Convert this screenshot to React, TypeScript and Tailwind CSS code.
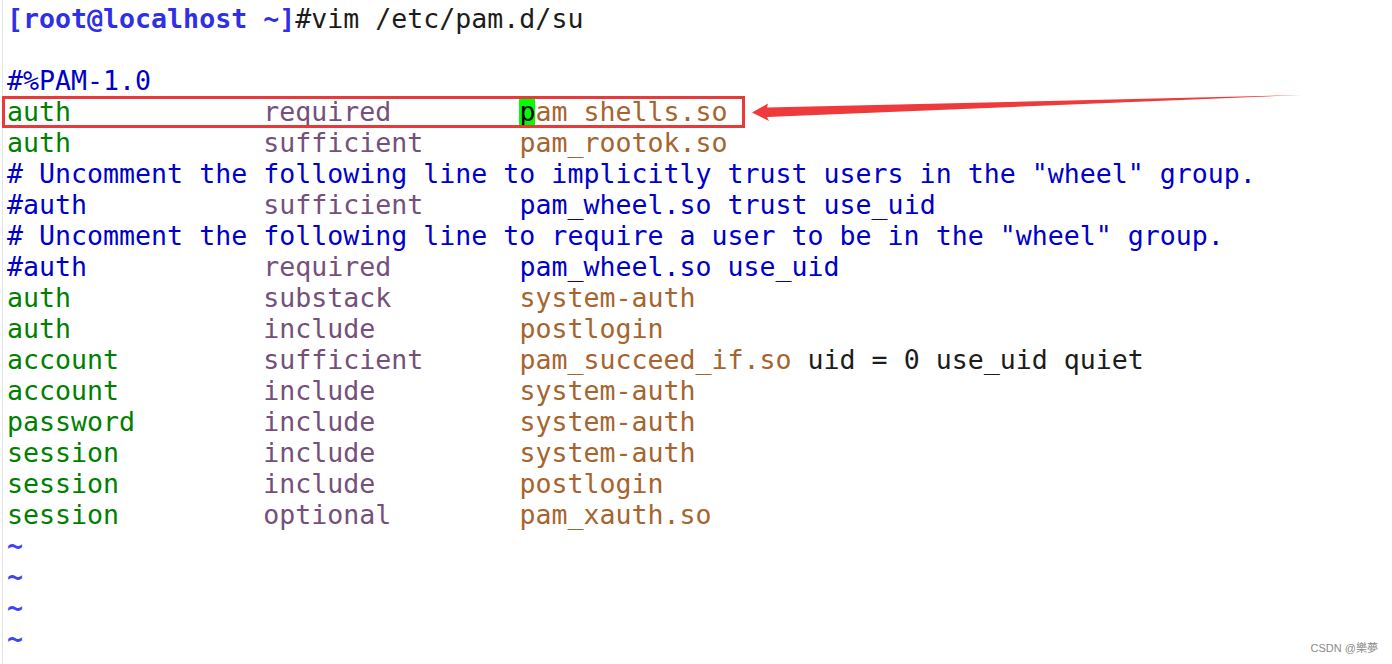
const green = "text-[#008000]";
const purple = "text-[#75507b]";
const brown = "text-[#a6642f]";
const blue = "text-[#0000c8]";

function Row({ children }: { children?: React.ReactNode }) {
  return <div className="h-[31px] leading-[31px] whitespace-pre">{children}</div>;
}

function Entry({ a, b, c, rest }: { a: string; b: string; c: string; rest?: string }) {
  return (
    <Row>
      <span className={green}>{a.padEnd(16, " ")}</span>
      <span className={purple}>{b.padEnd(16, " ")}</span>
      <span className={brown}>{c}</span>
      {rest && <span className="text-[#1c1c1c]">{rest}</span>}
    </Row>
  );
}

export default function App() {
  return (
    <div className="relative w-[1392px] h-[664px] bg-white overflow-hidden">
      <div className="h-full ml-[2px] border-l border-[#e4e4e4] pl-[4px] pt-[3px] font-['DejaVu_Sans_Mono',monospace] text-[26.6px]">
        <Row>
          <span className="font-bold text-[#2f2fe6]">[root@localhost ~]</span>
          <span className="text-[#1c1c1c]">#vim /etc/pam.d/su</span>
        </Row>
        <Row />
        <Row><span className={blue}>#%PAM-1.0</span></Row>
        <div className="relative">
          <Row>
            <span className={green}>{"auth".padEnd(16, " ")}</span>
            <span className={purple}>{"required".padEnd(16, " ")}</span>
            <span className="bg-[#00ff00] text-black">p</span>
            <span className={brown}>am_shells.so</span>
          </Row>
          <div className="absolute left-[-5px] top-0 w-[743px] h-[32px] border-[3px] border-[#e8393b]" />
        </div>
        <Entry a="auth" b="sufficient" c="pam_rootok.so" />
        <Row><span className={blue}># Uncomment the following line to implicitly trust users in the "wheel" group.</span></Row>
        <Row><span className={blue}>{"#auth".padEnd(16, " ")}</span><span className={purple}>{"sufficient".padEnd(16, " ")}</span><span className={blue}>pam_wheel.so trust use_uid</span></Row>
        <Row><span className={blue}># Uncomment the following line to require a user to be in the "wheel" group.</span></Row>
        <Row><span className={blue}>{"#auth".padEnd(16, " ")}</span><span className={purple}>{"required".padEnd(16, " ")}</span><span className={blue}>pam_wheel.so use_uid</span></Row>
        <Entry a="auth" b="substack" c="system-auth" />
        <Entry a="auth" b="include" c="postlogin" />
        <Entry a="account" b="sufficient" c="pam_succeed_if.so" rest=" uid = 0 use_uid quiet" />
        <Entry a="account" b="include" c="system-auth" />
        <Entry a="password" b="include" c="system-auth" />
        <Entry a="session" b="include" c="system-auth" />
        <Entry a="session" b="include" c="postlogin" />
        <Entry a="session" b="optional" c="pam_xauth.so" />
        {[0, 1, 2, 3].map((i) => (
          <Row key={i}><span className="font-bold text-[#4343f5]">~</span></Row>
        ))}
      </div>
      <svg className="absolute left-0 top-0 pointer-events-none" width="1392" height="664">
        <polygon points="752,112.5 768,103.5 767,107.5 1302,95 767,117 769,121" fill="#ee3a3a" />
      </svg>
      <div className="absolute right-[14px] bottom-[8px] text-[11px] text-[#8a8a8a] font-['Liberation_Sans','Noto_Sans_CJK_SC',sans-serif]">
        CSDN @樂夢
      </div>
    </div>
  );
}
